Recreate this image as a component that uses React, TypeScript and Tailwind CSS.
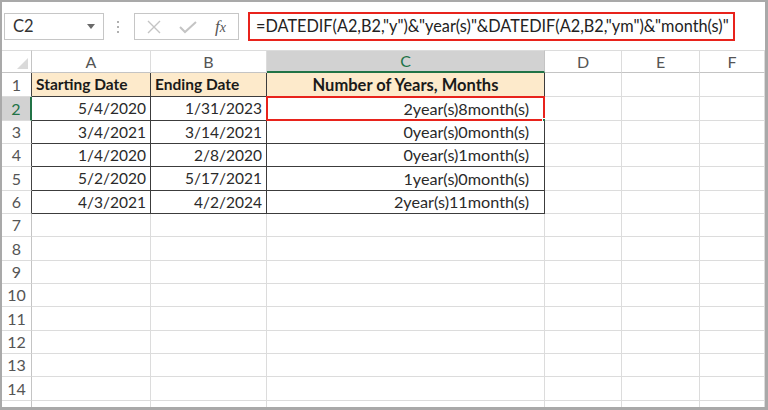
import React from "react";

const FONT = { fontFamily: "Lato, 'Open Sans', sans-serif" };

type RowData = [string, string, string];
const data: RowData[] = [
  ["5/4/2020", "1/31/2023", "2year(s)8month(s)"],
  ["3/4/2021", "3/14/2021", "0year(s)0month(s)"],
  ["1/4/2020", "2/8/2020", "0year(s)1month(s)"],
  ["5/2/2020", "5/17/2021", "1year(s)0month(s)"],
  ["4/3/2021", "4/2/2024", "2year(s)11month(s)"],
];

const rowHeights = [24, 24, 23, 23, 24, 23, 23, 24, 23, 23, 24, 23, 23, 24];
const headerRowClasses: Record<number, string> = {
  24: "h-[24px]",
  23: "h-[23px]",
};

function RowHeader({ n, h }: { n: number; h: number }) {
  const sel = n === 2;
  const inTable = n >= 1 && n <= 6;
  const cls = sel
    ? "bg-[#d2d2d2] text-[#217346] border-r-2 border-r-[#217346]"
    : inTable
    ? "bg-white text-[#555] border-r border-r-[#444]"
    : "bg-white text-[#555] border-r border-r-[#c4c4c4]";
  return (
    <div
      className={`${headerRowClasses[h]} ${cls} border-b border-b-[#dcdcdc] flex items-center justify-center text-[16px] leading-none`}
    >
      {n}
    </div>
  );
}

function DataCell({
  text,
  row,
  col,
  h,
}: {
  text?: string;
  row: number;
  col: number;
  h: number;
}) {
  const inTable = row >= 1 && row <= 6 && col <= 3;
  const header = row === 1 && col <= 3;
  const bg = header ? "bg-[#fdeacb]" : "bg-white";
  const border = inTable ? "border-[#3c3c3c]" : "border-[#dcdcdc]";
  let align = "justify-end pr-[4px] text-[15.5px]";
  if (header && col === 3) align = "justify-center text-[16.5px]";
  else if (header) align = "justify-start pl-[4px] text-[15.5px]";
  else if (col === 3) align = "justify-end pr-[15px] text-[16.2px]";
  const weight = header ? "font-bold text-[#1a1a1a]" : "text-[#2a2a2a]";
  return (
    <div
      className={`${headerRowClasses[h]} ${bg} ${border} ${align} ${weight} relative border-r border-b flex items-center pt-[1px] leading-none whitespace-nowrap`}
    >
      {text}
      {row === 2 && col === 3 && (
        <>
          <div className="absolute -left-px -top-px -right-px -bottom-px border-2 border-[#e8231c]" />
          <div className="absolute -right-[3px] -bottom-[3px] w-[5px] h-[5px] bg-[#217346] border border-white" />
        </>
      )}
    </div>
  );
}

export default function App() {
  const letters = ["A", "B", "C", "D", "E", "F"];
  return (
    <div
      className="w-[768px] h-[410px] bg-white border-t-2 border-l-2 border-r-[3px] border-b-[3px] border-[#a9a9a9] flex flex-col overflow-hidden"
      style={FONT}
    >
      {/* Toolbar */}
      <div className="h-[48px] flex items-start pt-[11px] shrink-0">
        <div className="ml-[2px] w-[100px] h-[27px] border border-[#c6c6c6] flex items-center pl-[8px] pr-[8px] justify-between">
          <span className="text-[16.5px] text-[#333]">C2</span>
          <svg width="8" height="5" viewBox="0 0 8 5">
            <path d="M0 0 L8 0 L4 5 Z" fill="#6a6a6a" />
          </svg>
        </div>
        <div className="w-[30px] h-[27px] flex flex-col items-center justify-center gap-[3px] pr-[2px]">
          <div className="w-[2px] h-[2px] bg-[#b0b0b0]" />
          <div className="w-[2px] h-[2px] bg-[#b0b0b0]" />
          <div className="w-[2px] h-[2px] bg-[#b0b0b0]" />
        </div>
        <div className="w-[105px] h-[27px] border border-[#c6c6c6] flex items-center justify-around px-[3px]">
          <svg width="14" height="14" viewBox="0 0 14 14">
            <path d="M1 1 L13 13 M13 1 L1 13" stroke="#c4c4c4" strokeWidth="1.4" />
          </svg>
          <svg width="18" height="14" viewBox="0 0 18 14">
            <path d="M1 7 L6 12 L17 2" stroke="#c4c4c4" strokeWidth="2" fill="none" />
          </svg>
          <span
            className="text-[17px] italic text-[#555] leading-none"
            style={{ fontFamily: "'Liberation Serif', serif" }}
          >
            f<span className="text-[14px]">x</span>
          </span>
        </div>
        <div className="ml-[9px] -mt-[1px] w-[487px] h-[29px] border-2 border-[#e8231c] flex items-center pl-[6px] text-[16.3px] text-[#222] whitespace-nowrap">
          =DATEDIF(A2,B2,"y")&amp;"year(s)"&amp;DATEDIF(A2,B2,"ym")&amp;"month(s)"
        </div>
      </div>

      {/* Grid */}
      <div className="flex-1 overflow-hidden">
        <div className="grid grid-cols-[30px_119px_116px_278px_77px_78px_65px]">
          {/* column header row */}
          <div className="h-[23px] border-t border-t-[#dcdcdc] border-r border-r-[#c4c4c4] border-b border-b-[#c4c4c4] bg-white relative">
            <svg className="absolute right-[3px] bottom-[3px]" width="11" height="11" viewBox="0 0 11 11">
              <path d="M11 0 L11 11 L0 11 Z" fill="#dadada" />
            </svg>
          </div>
          {letters.map((l) =>
            l === "C" ? (
              <div
                key={l}
                className="h-[23px] border-t border-t-[#dcdcdc] bg-[#d2d2d2] border-r border-r-[#c4c4c4] border-b-2 border-b-[#217346] text-[#217346] flex items-center justify-center text-[16px] leading-none"
              >
                {l}
              </div>
            ) : (
              <div
                key={l}
                className="h-[23px] border-t border-t-[#dcdcdc] bg-white border-r border-r-[#dcdcdc] border-b border-b-[#c4c4c4] text-[#555] flex items-center justify-center text-[16px] leading-none"
              >
                {l}
              </div>
            )
          )}
          {rowHeights.map((h, i) => {
            const row = i + 1;
            let cells: (string | undefined)[] = [];
            if (row === 1) cells = ["Starting Date", "Ending Date", "Number of Years, Months"];
            else if (row <= 6) cells = data[row - 2];
            return (
              <React.Fragment key={row}>
                <RowHeader n={row} h={h} />
                {[1, 2, 3, 4, 5, 6].map((c) => (
                  <DataCell key={c} row={row} col={c} h={h} text={cells[c - 1]} />
                ))}
              </React.Fragment>
            );
          })}
          <div className="h-[6px] border-r border-r-[#c4c4c4] bg-white" />
          {[1, 2, 3, 4, 5, 6].map((c) => (
            <div key={c} className="h-[6px] border-r border-r-[#dcdcdc] bg-white" />
          ))}
        </div>
      </div>
    </div>
  );
}
